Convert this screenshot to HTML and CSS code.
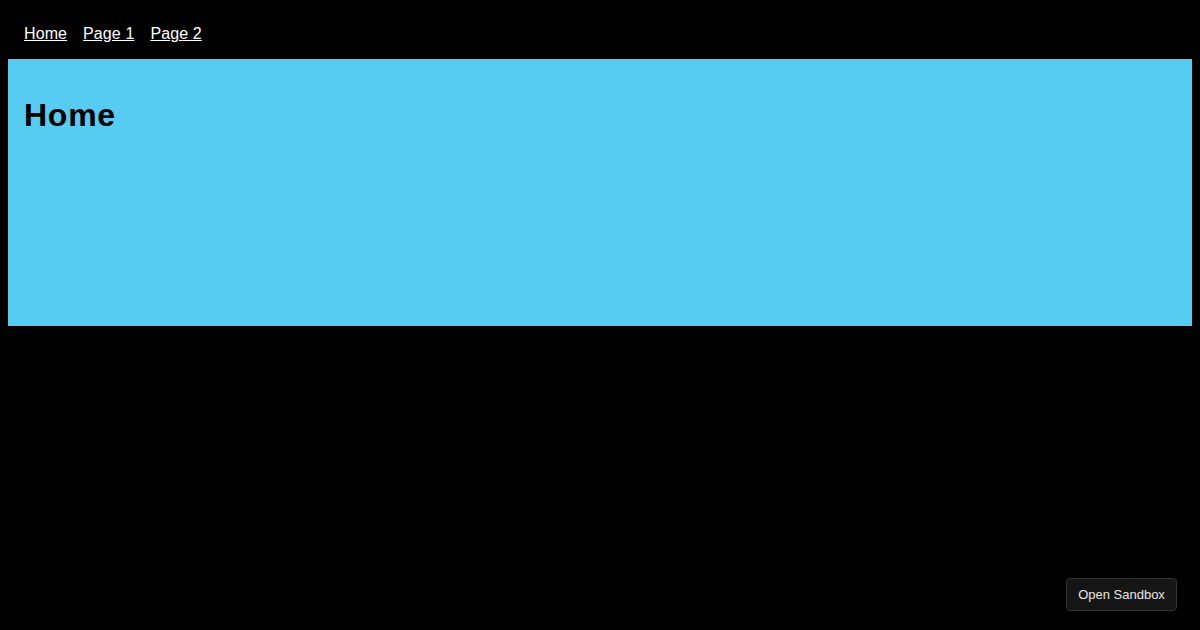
FILE: index.html
```html
<!DOCTYPE html>
<html>
<head>
<meta charset="utf-8">
<link rel="stylesheet" href="styles.css">
</head>
<body>
<nav class="nav">
  <a href="#">Home</a>
  <a href="#">Page 1</a>
  <a href="#">Page 2</a>
</nav>
<main class="panel">
  <h1 class="title">Home</h1>
</main>
<button class="sandbox">Open Sandbox</button>
</body>
</html>
```
FILE: styles.css
```css
html, body {
  background: #000;
}
body {
  margin: 8px;
  font-family: "Liberation Sans", Arial, sans-serif;
  color: #fff;
}
.nav {
  display: flex;
  gap: 16px;
  padding: 16px 16px;
  height: 51px;
  box-sizing: border-box;
  font-size: 16px;
  line-height: 19px;
}
.nav a {
  color: #fff;
  text-decoration: underline;
  letter-spacing: 0.1px;
}
.panel {
  background: #56ccf2;
  height: 267px;
  box-sizing: border-box;
  padding: 16px;
  display: flow-root;
}
.title {
  margin: 22px 0 20px;
  font-size: 32px;
  font-weight: bold;
  color: #000;
  letter-spacing: 0.75px;
}
.sandbox {
  position: fixed;
  right: 23px;
  bottom: 19px;
  width: 111px;
  height: 33px;
  background: #151515;
  color: #e6e6e6;
  border: 1px solid #333;
  border-radius: 4px;
  font-family: "Liberation Sans", Arial, sans-serif;
  font-size: 13px;
  padding: 0;
}
```
